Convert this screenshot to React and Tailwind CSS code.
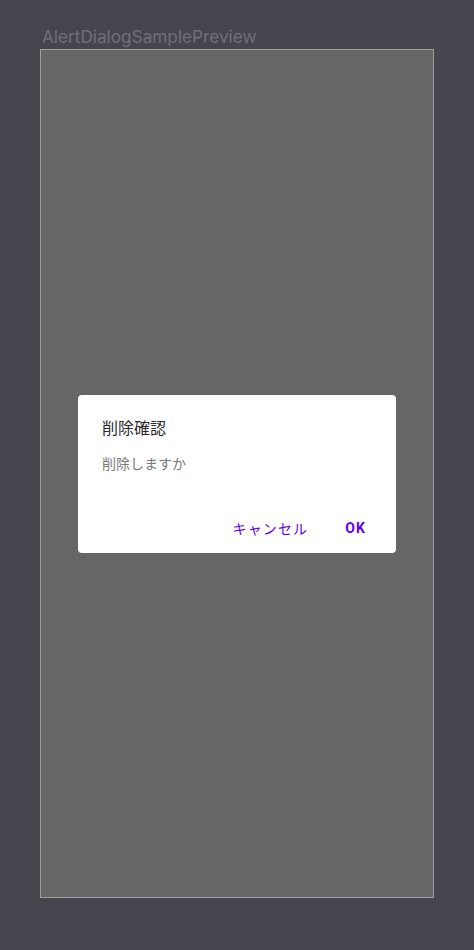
import React from "react";

export default function App() {
  return (
    <div
      className="w-[474px] h-[950px] bg-[#46454e] flex flex-col pl-[40px] pt-[24px]"
      style={{ fontFamily: '"Noto Sans CJK JP", "Noto Sans", sans-serif' }}
    >
      <div
        className="h-[25px] pl-[2px] text-[17.2px] leading-[25px] text-[#706f78]"
        style={{ fontFamily: 'Inter, "Noto Sans", sans-serif' }}
      >
        AlertDialogSamplePreview
      </div>
      <div className="w-[394px] h-[849px] border border-[#9e9e9e] bg-[#666666] flex items-center justify-center">
        <div className="w-[318px] h-[158px] bg-white rounded-[4px] flex flex-col pt-[20px]">
          <div className="pl-[24px] text-[16px] leading-[24px] text-[#2a2a2a]">削除確認</div>
          <div className="pl-[24px] pt-[14px] text-[14px] leading-[20px] text-[#7a7a7a]">削除しますか</div>
          <div className="mt-auto flex justify-end items-center h-[36px] mb-[6px] pr-[16px] gap-[15px]">
            <div className="px-[8px] h-[36px] flex items-center text-[14px] font-normal tracking-[0.08em] text-[#6200ee]">
              キャンセル
            </div>
            <div
              className="px-[14px] h-[36px] flex items-center text-[14px] font-bold tracking-[0.08em] text-[#6200ee]"
              style={{ fontFamily: 'Roboto, "Noto Sans", sans-serif' }}
            >
              OK
            </div>
          </div>
        </div>
      </div>
    </div>
  );
}
